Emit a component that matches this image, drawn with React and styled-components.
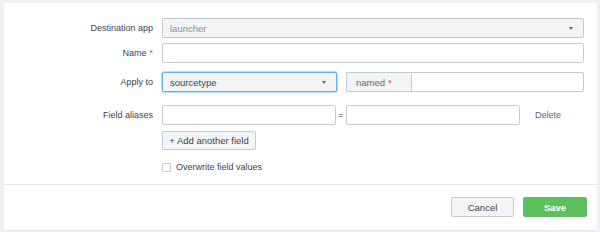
import React from 'react'
import styled, { createGlobalStyle } from 'styled-components'

const GlobalStyle = createGlobalStyle`
  html, body {
    margin: 0;
    padding: 0;
    background: #eef0f3;
  }
  body {
    font-family: "Liberation Sans", Arial, sans-serif;
    font-size: 9px;
    color: #3c444d;
  }
  * {
    box-sizing: border-box;
  }
`

const Page = styled.div`
  width: 600px;
  height: 232px;
  padding: 3px 3px 1px 4px;
`

const Panel = styled.div`
  height: 228px;
  background: #fff;
  display: flex;
  flex-direction: column;
  border-bottom: 1px solid #e1e4e8;
`

const Body = styled.div`
  padding: 15px 13px 0 0;
  height: 182px;
  border-bottom: 1px solid #e1e4e8;
`

const Row = styled.div`
  display: grid;
  grid-template-columns: 149px 1fr;
  column-gap: 9px;
  align-items: center;
  margin-top: ${p => p.gap || 0}px;
`

const Label = styled.label`
  text-align: right;
  font-size: 9px;
  color: #3c444d;
`

const Req = styled.span`
  color: #d6563c;
  margin-left: 3px;
`

const Controls = styled.div`
  display: flex;
  align-items: center;
  height: 20px;
`

const Select = styled.div`
  display: flex;
  align-items: center;
  justify-content: space-between;
  width: ${p => p.width || '100%'};
  height: 20px;
  padding: 0 10px 0 7px;
  background: #f2f4f5;
  border: 1px solid ${p => (p.focus ? '#5fb3f0' : '#c3cbd4')};
  box-shadow: ${p => (p.focus ? '0 0 0 1px #b5ddfa' : 'none')};
  border-radius: 2px;
  color: ${p => (p.muted ? '#818d99' : '#3c444d')};
  font-size: 9.5px;
`

const Caret = styled.span`
  width: 0;
  height: 0;
  border-left: 2.5px solid transparent;
  border-right: 2.5px solid transparent;
  border-top: 3px solid #5c6773;
`

const Input = styled.div`
  width: ${p => p.width || 'auto'};
  flex: ${p => (p.width ? 'none' : 1)};
  height: 20px;
  border: 1px solid #c3cbd4;
  border-radius: ${p => p.radius || '2px'};
  background: #fff;
`

const Group = styled.div`
  display: flex;
  flex: 1;
  margin-left: 9px;
  height: 20px;
`

const Addon = styled.div`
  display: flex;
  align-items: center;
  width: 65px;
  padding-left: 9px;
  background: #f2f4f5;
  border: 1px solid #c3cbd4;
  border-right: none;
  border-radius: 2px 0 0 2px;
  color: #5c6773;
  font-size: 9.5px;
`

const Equals = styled.span`
  width: 10px;
  text-align: center;
  color: #3c444d;
`

const DeleteLink = styled.span`
  margin-left: 15px;
  color: #5c6773;
  font-size: 9px;
`

const Button = styled.div`
  display: inline-flex;
  align-items: center;
  justify-content: center;
  height: ${p => p.h || 20}px;
  width: ${p => p.w}px;
  border-radius: 2px;
  font-size: 9.5px;
  background: ${p => (p.primary ? '#5cc05c' : '#f4f5f7')};
  border: 1px solid ${p => (p.primary ? '#5cc05c' : '#c3cbd4')};
  color: ${p => (p.primary ? '#fff' : '#3c444d')};
  font-weight: ${p => (p.primary ? 'bold' : 'normal')};
`

const CheckRow = styled.div`
  display: flex;
  align-items: center;
  gap: 5px;
  font-size: 9px;
`

const Box = styled.span`
  width: 9px;
  height: 9px;
  border: 1px solid #c3cbd4;
  border-radius: 1px;
  background: #fff;
`

const Footer = styled.div`
  flex: 1;
  display: flex;
  justify-content: flex-end;
  align-items: flex-start;
  gap: 9px;
  padding: 12px 10px 0 0;
`

export default function App() {
  return (
    <Page>
      <GlobalStyle />
      <Panel>
        <Body>
          <Row>
            <Label>Destination app</Label>
            <Controls>
              <Select muted>
                launcher
                <Caret />
              </Select>
            </Controls>
          </Row>
          <Row gap={5}>
            <Label>
              Name<Req>*</Req>
            </Label>
            <Controls>
              <Input />
            </Controls>
          </Row>
          <Row gap={9}>
            <Label>Apply to</Label>
            <Controls>
              <Select focus width="175px">
                sourcetype
                <Caret />
              </Select>
              <Group>
                <Addon>
                  named<Req>*</Req>
                </Addon>
                <Input radius="0 2px 2px 0" />
              </Group>
            </Controls>
          </Row>
          <Row gap={13}>
            <Label>Field aliases</Label>
            <Controls>
              <Input width="174px" />
              <Equals>=</Equals>
              <Input width="174px" />
              <DeleteLink>Delete</DeleteLink>
            </Controls>
          </Row>
          <Row gap={6}>
            <span />
            <div>
              <Button w={94} h={19}>+ Add another field</Button>
            </div>
          </Row>
          <Row gap={12}>
            <span />
            <CheckRow>
              <Box />
              Overwrite field values
            </CheckRow>
          </Row>
        </Body>
        <Footer>
          <Button w={63}>Cancel</Button>
          <Button w={64} primary>
            Save
          </Button>
        </Footer>
      </Panel>
    </Page>
  )
}
